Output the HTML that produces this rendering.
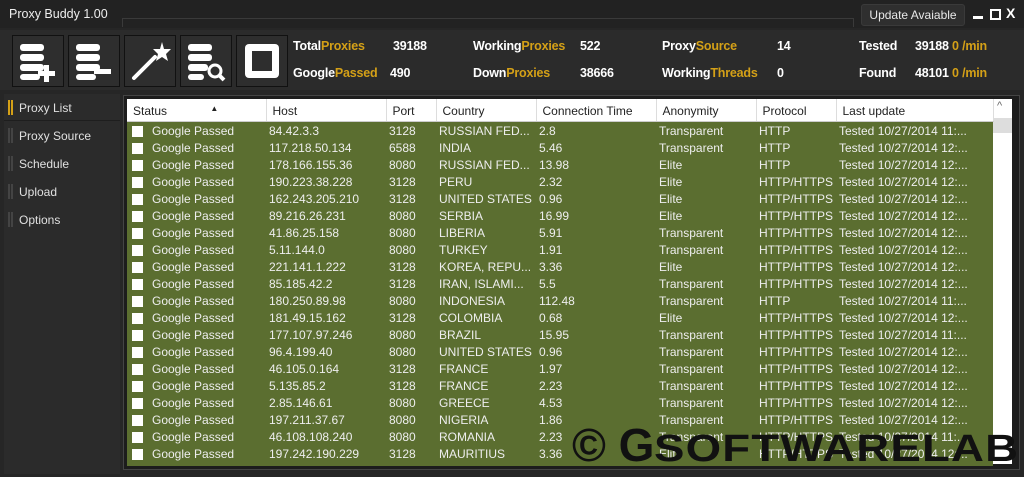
<!DOCTYPE html><html><head><style>
body{margin:0;width:1024px;height:477px;background:#262626;font-family:"Liberation Sans",sans-serif;font-size:12px;color:#e8e8e8;overflow:hidden;position:relative}
.a{position:absolute}
.tb{width:50px;height:50px;border:1px solid #111;background:#2e2e2e;top:35px}
.s{font-weight:bold;font-size:12.5px;color:#fff;letter-spacing:-0.2px}
.s b{color:#d4a017;font-weight:bold}
table{border-collapse:collapse;position:absolute;left:127px;top:99px;width:866px;font-size:12px;table-layout:fixed}
th{background:#fff;color:#222;font-weight:normal;text-align:left;height:20px;padding:2px 0 0 6px;border-right:1px solid #ddd;border-bottom:1px solid #ccc}
td{height:17px;padding:0 0 0 3px;white-space:nowrap;overflow:hidden;color:#eee}
tr.r{background:#5b6e30}
.cb{display:inline-block;width:11px;height:11px;background:#fff;vertical-align:-2px;margin:0 9px 0 2px}
.nav{left:8px;font-size:12px;color:#e0e0e0}
.bar{display:inline-block;height:15px;border-left:2px solid #444;border-right:2px solid #444;margin-right:6px;vertical-align:-3px;width:1px}
</style></head><body>
<div class="a" style="left:0;top:0;width:1024px;height:28px;background:#222"></div>
<div class="a" style="left:9px;top:7px;font-size:12.5px;color:#eee">Proxy Buddy 1.00</div>
<div class="a" style="left:122px;top:18px;width:730px;height:8px;border:1px solid #3a3a3a;border-bottom:none"></div>
<div class="a" style="left:861px;top:4px;width:102px;height:20px;background:#2f2f2f;border-radius:3px;border:1px solid #3a3a3a;font-size:12px;line-height:20px;text-align:center">Update Avaiable</div>
<div class="a" style="left:973px;top:16px;width:10px;height:3px;background:#fff"></div>
<div class="a" style="left:990px;top:9px;width:7px;height:7px;border:2px solid #fff"></div>
<div class="a" style="left:1006px;top:5px;font-weight:bold;font-size:14px;color:#fff">X</div>
<div class="a" style="left:0;top:30px;width:1024px;height:60px;background:#2b2b2b"></div>
<div class="a tb" style="left:12px"><svg width="50" height="50"><g fill="#fff"><rect x="7" y="8" width="24" height="7" rx="3"/><rect x="7" y="18" width="24" height="7" rx="3"/><rect x="7" y="28" width="24" height="7" rx="3"/><rect x="7" y="38" width="20" height="6" rx="3"/><rect x="31" y="29" width="5" height="17"/><rect x="25" y="35" width="17" height="5"/></g></svg></div>
<div class="a tb" style="left:68px"><svg width="50" height="50"><g fill="#fff"><rect x="7" y="8" width="24" height="7" rx="3"/><rect x="7" y="18" width="24" height="7" rx="3"/><rect x="7" y="28" width="24" height="7" rx="3"/><rect x="7" y="38" width="20" height="6" rx="3"/><rect x="25" y="33" width="17" height="5"/></g></svg></div>
<div class="a tb" style="left:124px"><svg width="50" height="50"><path d="M9 42L30 21" stroke="#fff" stroke-width="4" stroke-linecap="round"/><polygon fill="#fff" points="37,6 39,13 46,13 41,18 43,25 37,21 31,25 33,18 28,13 35,13"/></svg></div>
<div class="a tb" style="left:180px"><svg width="50" height="50"><g fill="#fff"><rect x="7" y="8" width="24" height="7" rx="3"/><rect x="7" y="18" width="24" height="7" rx="3"/><rect x="7" y="28" width="20" height="7" rx="3"/><rect x="7" y="38" width="16" height="6" rx="3"/></g><circle cx="34" cy="35" r="6" stroke="#fff" stroke-width="3" fill="none"/><path d="M38 39L43 44" stroke="#fff" stroke-width="4"/></svg></div>
<div class="a tb" style="left:236px"><svg width="50" height="50"><rect x="8" y="8" width="34" height="34" rx="4" fill="#fff"/><rect x="15" y="15" width="20" height="20" fill="#2e2e2e"/></svg></div>
<div class="a s" style="left:293px;top:39px">Total<b>Proxies</b></div><div class="a s" style="left:393px;top:39px">39188</div>
<div class="a s" style="left:293px;top:66px">Google<b>Passed</b></div><div class="a s" style="left:390px;top:66px">490</div>
<div class="a s" style="left:473px;top:39px">Working<b>Proxies</b></div><div class="a s" style="left:580px;top:39px">522</div>
<div class="a s" style="left:473px;top:66px">Down<b>Proxies</b></div><div class="a s" style="left:580px;top:66px">38666</div>
<div class="a s" style="left:662px;top:39px">Proxy<b>Source</b></div><div class="a s" style="left:777px;top:39px">14</div>
<div class="a s" style="left:662px;top:66px">Working<b>Threads</b></div><div class="a s" style="left:777px;top:66px">0</div>
<div class="a s" style="left:859px;top:39px">Tested</div><div class="a s" style="left:915px;top:39px">39188 <b>0 /min</b></div>
<div class="a s" style="left:859px;top:66px">Found</div><div class="a s" style="left:915px;top:66px">48101 <b>0 /min</b></div>
<div class="a" style="left:4px;top:94px;width:116px;height:380px;background:#2b2b2b"></div>
<div class="a" style="left:4px;top:120px;width:116px;height:1px;background:#1e1e1e"></div>
<div class="a nav" style="top:100px"><span class="bar" style="border-color:#d4a017"></span>Proxy List</div>
<div class="a nav" style="top:128px"><span class="bar"></span>Proxy Source</div>
<div class="a nav" style="top:156px"><span class="bar"></span>Schedule</div>
<div class="a nav" style="top:184px"><span class="bar"></span>Upload</div>
<div class="a nav" style="top:212px"><span class="bar"></span>Options</div>
<div class="a" style="left:123px;top:95px;width:895px;height:373px;background:#1c1c1c;border:1px solid #444"></div>
<div class="a" style="left:993px;top:99px;width:19px;height:365px;background:#fff"></div>
<div class="a" style="left:997px;top:100px;font-size:11px;color:#666">^</div>
<div class="a" style="left:993px;top:118px;width:19px;height:15px;background:#ddd"></div>
<table>
<colgroup><col style="width:139px"><col style="width:120px"><col style="width:50px"><col style="width:100px"><col style="width:120px"><col style="width:100px"><col style="width:80px"><col style="width:157px"></colgroup>
<tr><th>Status <span style="margin-left:40px;font-size:8px;vertical-align:4px">▲</span></th><th>Host</th><th>Port</th><th>Country</th><th>Connection Time</th><th>Anonymity</th><th>Protocol</th><th>Last update</th></tr>
<tr class="r"><td><span class="cb"></span>Google Passed</td><td>84.42.3.3</td><td>3128</td><td>RUSSIAN FED...</td><td>2.8</td><td>Transparent</td><td>HTTP</td><td>Tested 10/27/2014 11:...</td></tr>
<tr class="r"><td><span class="cb"></span>Google Passed</td><td>117.218.50.134</td><td>6588</td><td>INDIA</td><td>5.46</td><td>Transparent</td><td>HTTP</td><td>Tested 10/27/2014 12:...</td></tr>
<tr class="r"><td><span class="cb"></span>Google Passed</td><td>178.166.155.36</td><td>8080</td><td>RUSSIAN FED...</td><td>13.98</td><td>Elite</td><td>HTTP</td><td>Tested 10/27/2014 12:...</td></tr>
<tr class="r"><td><span class="cb"></span>Google Passed</td><td>190.223.38.228</td><td>3128</td><td>PERU</td><td>2.32</td><td>Elite</td><td>HTTP/HTTPS</td><td>Tested 10/27/2014 12:...</td></tr>
<tr class="r"><td><span class="cb"></span>Google Passed</td><td>162.243.205.210</td><td>3128</td><td>UNITED STATES</td><td>0.96</td><td>Elite</td><td>HTTP/HTTPS</td><td>Tested 10/27/2014 12:...</td></tr>
<tr class="r"><td><span class="cb"></span>Google Passed</td><td>89.216.26.231</td><td>8080</td><td>SERBIA</td><td>16.99</td><td>Elite</td><td>HTTP/HTTPS</td><td>Tested 10/27/2014 12:...</td></tr>
<tr class="r"><td><span class="cb"></span>Google Passed</td><td>41.86.25.158</td><td>8080</td><td>LIBERIA</td><td>5.91</td><td>Transparent</td><td>HTTP/HTTPS</td><td>Tested 10/27/2014 12:...</td></tr>
<tr class="r"><td><span class="cb"></span>Google Passed</td><td>5.11.144.0</td><td>8080</td><td>TURKEY</td><td>1.91</td><td>Transparent</td><td>HTTP/HTTPS</td><td>Tested 10/27/2014 12:...</td></tr>
<tr class="r"><td><span class="cb"></span>Google Passed</td><td>221.141.1.222</td><td>3128</td><td>KOREA, REPU...</td><td>3.36</td><td>Elite</td><td>HTTP/HTTPS</td><td>Tested 10/27/2014 12:...</td></tr>
<tr class="r"><td><span class="cb"></span>Google Passed</td><td>85.185.42.2</td><td>3128</td><td>IRAN, ISLAMI...</td><td>5.5</td><td>Transparent</td><td>HTTP/HTTPS</td><td>Tested 10/27/2014 12:...</td></tr>
<tr class="r"><td><span class="cb"></span>Google Passed</td><td>180.250.89.98</td><td>8080</td><td>INDONESIA</td><td>112.48</td><td>Transparent</td><td>HTTP</td><td>Tested 10/27/2014 11:...</td></tr>
<tr class="r"><td><span class="cb"></span>Google Passed</td><td>181.49.15.162</td><td>3128</td><td>COLOMBIA</td><td>0.68</td><td>Elite</td><td>HTTP/HTTPS</td><td>Tested 10/27/2014 12:...</td></tr>
<tr class="r"><td><span class="cb"></span>Google Passed</td><td>177.107.97.246</td><td>8080</td><td>BRAZIL</td><td>15.95</td><td>Transparent</td><td>HTTP/HTTPS</td><td>Tested 10/27/2014 11:...</td></tr>
<tr class="r"><td><span class="cb"></span>Google Passed</td><td>96.4.199.40</td><td>8080</td><td>UNITED STATES</td><td>0.96</td><td>Transparent</td><td>HTTP/HTTPS</td><td>Tested 10/27/2014 12:...</td></tr>
<tr class="r"><td><span class="cb"></span>Google Passed</td><td>46.105.0.164</td><td>3128</td><td>FRANCE</td><td>1.97</td><td>Transparent</td><td>HTTP/HTTPS</td><td>Tested 10/27/2014 12:...</td></tr>
<tr class="r"><td><span class="cb"></span>Google Passed</td><td>5.135.85.2</td><td>3128</td><td>FRANCE</td><td>2.23</td><td>Transparent</td><td>HTTP/HTTPS</td><td>Tested 10/27/2014 12:...</td></tr>
<tr class="r"><td><span class="cb"></span>Google Passed</td><td>2.85.146.61</td><td>8080</td><td>GREECE</td><td>4.53</td><td>Transparent</td><td>HTTP/HTTPS</td><td>Tested 10/27/2014 12:...</td></tr>
<tr class="r"><td><span class="cb"></span>Google Passed</td><td>197.211.37.67</td><td>8080</td><td>NIGERIA</td><td>1.86</td><td>Transparent</td><td>HTTP/HTTPS</td><td>Tested 10/27/2014 12:...</td></tr>
<tr class="r"><td><span class="cb"></span>Google Passed</td><td>46.108.108.240</td><td>8080</td><td>ROMANIA</td><td>2.23</td><td>Transparent</td><td>HTTP/HTTPS</td><td>Tested 10/27/2014 11:...</td></tr>
<tr class="r"><td><span class="cb"></span>Google Passed</td><td>197.242.190.229</td><td>3128</td><td>MAURITIUS</td><td>3.36</td><td>Elite</td><td>HTTP/HTTPS</td><td>Tested 10/27/2014 12:...</td></tr>
</table>
<div class="a" style="left:127px;top:462px;width:866px;height:4px;background:#5b6e30"></div>
<div class="a" style="left:572px;top:420px;font-family:'Liberation Sans',sans-serif;font-weight:900;font-size:46px;color:#111;line-height:50px;white-space:nowrap">© G<span style="font-size:38px;letter-spacing:1px;display:inline-block;transform:scaleX(1.2);transform-origin:left">SOFTWARELAB</span></div>
</body></html>
